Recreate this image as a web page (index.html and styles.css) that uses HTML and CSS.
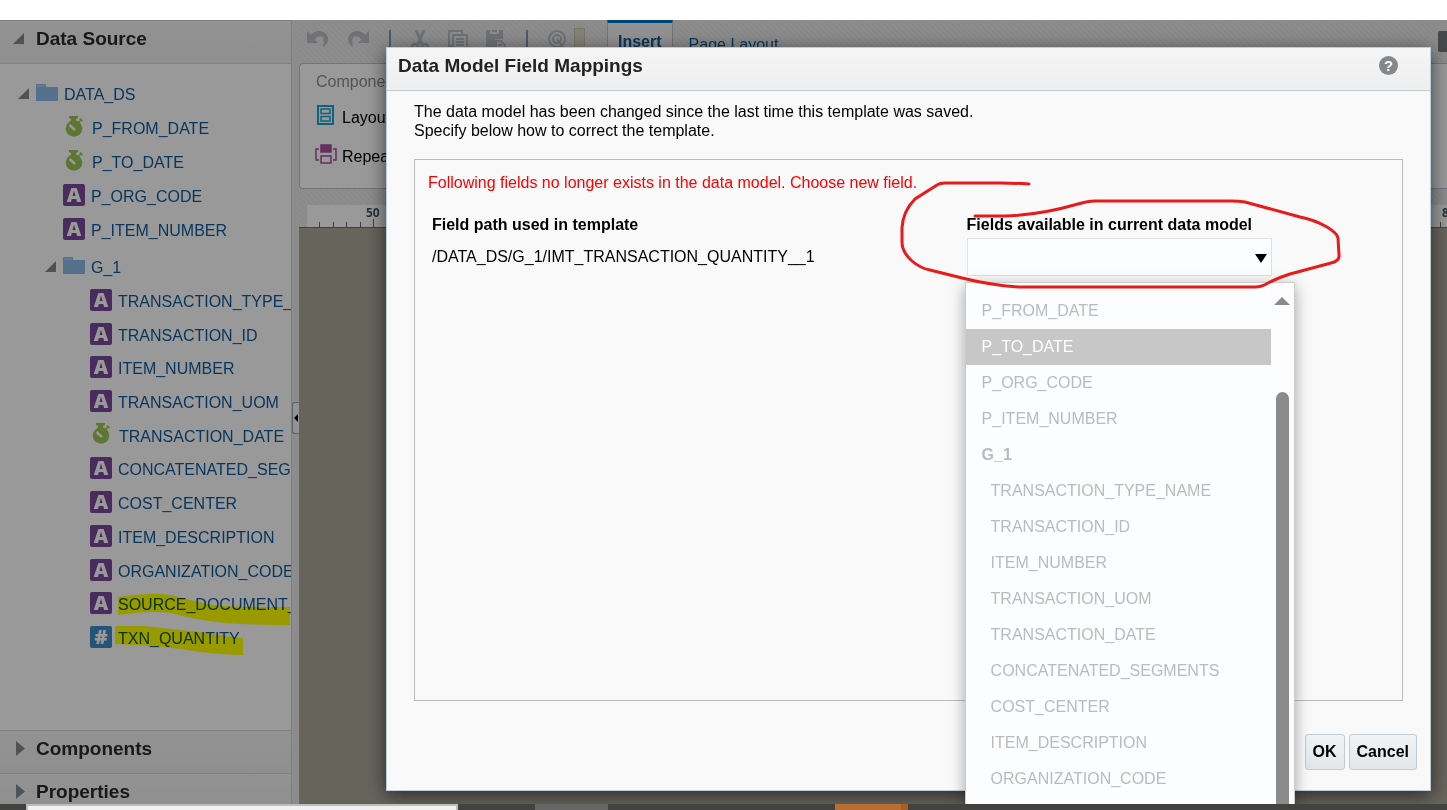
FILE: index.html
```html
<!DOCTYPE html>
<html lang="en">
  <head>
    <meta charset="UTF-8" />
    <title>Data Model Field Mappings</title>
    <link rel="stylesheet" href="styles.css">
  </head>
  <body>
    <svg class="defs" width="0" height="0">
      <symbol id="folder" viewBox="0 0 22 18">
        <path fill="#8bbde9" d="M0 1q0-1 1-1h8q1 0 1 1v2h12v14H0z" />
        <path fill="#a5cdf0" d="M1 1h8v2H1z" />
      </symbol>
      <symbol id="timer" viewBox="0 0 18 21">
        <circle cx="9" cy="12.5" r="8.3" fill="#9bc652" />
        <path fill="#9bc652" d="M4 0h9v2l-2 1v3H6V3L4 2zM13 6l2-2-.8-.8L15.500 2 18 4.500l-1.200 1-.8-.6-2 2z" />
        <path stroke="#fff" stroke-width="2.4" d="M4.500 9l5.500 5" />
      </symbol>
      <symbol id="open" viewBox="0 0 11 11">
        <path fill="#868b8f" d="M11 0v11H0z" />
      </symbol>
      <symbol id="closed" viewBox="0 0 9 15">
        <path fill="#868b8f" d="M0 0l9 7.5L0 15z" />
      </symbol>
    </svg>

    <div class="workspace">
      <aside class="sidebar">
        <h2 class="panel-title">
          <svg class="arrow" width="11" height="11"><use href="#open" /></svg>
          Data Source
        </h2>
        <div class="tree">
          <div class="node root">
            <svg class="arrow" width="11" height="11"><use href="#open" /></svg>
            <svg width="22" height="18"><use href="#folder" /></svg>
            <a href="#">DATA_DS</a>
          </div>
          <ul class="leaves params">
            <li><svg class="timer" width="18" height="21"><use href="#timer" /></svg><a href="#">P_FROM_DATE</a></li>
            <li><svg class="timer" width="18" height="21"><use href="#timer" /></svg><a href="#">P_TO_DATE</a></li>
            <li><span class="type">A</span><a href="#">P_ORG_CODE</a></li>
            <li><span class="type">A</span><a href="#">P_ITEM_NUMBER</a></li>
          </ul>
          <div class="node group">
            <svg class="arrow" width="11" height="11"><use href="#open" /></svg>
            <svg width="22" height="18"><use href="#folder" /></svg>
            <a href="#">G_1</a>
          </div>
          <ul class="leaves fields">
            <li><span class="type">A</span><a href="#">TRANSACTION_TYPE_</a></li>
            <li><span class="type">A</span><a href="#">TRANSACTION_ID</a></li>
            <li><span class="type">A</span><a href="#">ITEM_NUMBER</a></li>
            <li><span class="type">A</span><a href="#">TRANSACTION_UOM</a></li>
            <li><svg class="timer" width="18" height="21"><use href="#timer" /></svg><a href="#">TRANSACTION_DATE</a></li>
            <li><span class="type">A</span><a href="#">CONCATENATED_SEG</a></li>
            <li><span class="type">A</span><a href="#">COST_CENTER</a></li>
            <li><span class="type">A</span><a href="#">ITEM_DESCRIPTION</a></li>
            <li><span class="type">A</span><a href="#">ORGANIZATION_CODE</a></li>
            <li>
              <span class="type">A</span><a href="#">SOURCE_DOCUMENT_</a>
              <svg class="marker" width="180" height="36" viewBox="112 587 180 36">
                <path d="M118 597Q134 594 150 594Q166 593 182 598Q200 603 220 606Q245 607 290 607V625Q250 625 225 623Q190 619 172 613Q150 610 118 615z" />
              </svg>
            </li>
            <li>
              <span class="type number">#</span><a href="#">TXN_QUANTITY</a>
              <svg class="marker" width="180" height="36" viewBox="112 620 180 36">
                <path d="M115 626H145Q170 629 200 632Q230 637 243 638V655Q225 655 200 652Q160 645 115 644z" />
              </svg>
            </li>
          </ul>
        </div>
        <h2 class="panel-title">
          <svg class="arrow" width="9" height="15"><use href="#closed" /></svg>
          Components
        </h2>
        <h2 class="panel-title last">
          <svg class="arrow" width="9" height="15"><use href="#closed" /></svg>
          Properties
        </h2>
      </aside>

      <div class="splitter">
        <button class="collapse" aria-label="Collapse panel">
          <svg width="4" height="8"><path d="M4 0v8L0 4z" /></svg>
        </button>
      </div>

      <main class="editor">
        <div class="toolbar">
          <div class="tools">
            <svg width="22" height="18" viewBox="0 0 22 18"><path fill="#b9bdc1" d="M0 1v12h11L7.500 9.500Q11 5 15 6.500Q18 8 16 17Q22 13 21 7Q18 1 12 1Q7 1 4 5z" /></svg>
            <svg width="22" height="18" viewBox="0 0 22 18"><path fill="#b9bdc1" d="M22 1v12H11l3.500-3.500Q11 5 7 6.500Q4 8 6 17Q0 13 1 7Q4 1 10 1Q15 1 18 5z" /></svg>
            <i class="separator"></i>
            <svg width="20" height="22" viewBox="0 0 20 22" fill="none" stroke="#b9bdc1" stroke-width="3"><path d="M6 0l6 14M14 0L8 14" /><circle cx="5" cy="17" r="3" /><circle cx="15" cy="17" r="3" /></svg>
            <svg width="20" height="22" viewBox="0 0 20 22" fill="none" stroke="#b9bdc1" stroke-width="2"><path d="M4 16H1V1h13v3M5 5h14v16H5zM8 9h8M8 12h8M8 15h8" /></svg>
            <svg width="20" height="22" viewBox="0 0 20 22"><path fill="#b9bdc1" d="M0 0h4v4h9V0h4v9H9v9H0zM6 0h5v2H6z" /><path fill="none" stroke="#b9bdc1" stroke-width="2" d="M10 11h5l4 4v6h-9zM12 15h4" /></svg>
            <i class="separator"></i>
            <svg width="20" height="22" viewBox="0 0 20 22" fill="none" stroke="#b9bdc1" stroke-width="2"><circle cx="10" cy="9" r="8" /><circle cx="10" cy="9" r="4" /><path d="M10 9l7 9" /></svg>
            <i class="swatch"></i>
          </div>
          <nav class="tabs">
            <a class="tab active" href="#">Insert</a>
            <a class="tab" href="#">Page Layout</a>
          </nav>
          <button class="panel-toggle" aria-label="Toggle panel"></button>
        </div>

        <div class="ribbon">
          <div class="ribbon-title">Components</div>
          <button class="component">
            <svg width="22" height="20" viewBox="0 0 22 20" fill="none" stroke="#18a5cf"><path stroke-width="2" d="M3 1h15v18H3z" /><path stroke-width="1.500" d="M6 4h9v4.500H6zM6 11.500h9V16H6z" /></svg>
            Layout Grid
          </button>
          <button class="component">
            <svg width="22" height="20" viewBox="0 0 22 20" fill="none" stroke="#a8509c" stroke-width="1.500"><path fill="#a8509c" d="M6 1h10v7H6z" /><path d="M6 12h10v7H6zM4 5H1v11h3M18 5h3v11h-3" /></svg>
            Repeating Section
          </button>
        </div>

        <div class="ruler">
          <svg width="80" height="22" viewBox="307 205 80 22"><path d="M319.500 222v5M333.500 222v5M346.500 222v5M360.500 222v5M373.500 219v8" /><text x="366" y="217">50</text></svg>
          <svg width="10" height="22" viewBox="1437 205 10 22"><path d="M1440.500 222v5" /><text x="1442" y="217">8</text></svg>
        </div>
        <div class="canvas"></div>
      </main>

      <div class="scrim">
        <section class="dialog" role="dialog" aria-labelledby="dialog-title">
          <header class="dialog-header">
            <h1 id="dialog-title">Data Model Field Mappings</h1>
            <button class="help" aria-label="Help">?</button>
          </header>
          <div class="dialog-body">
            <p class="message">
              The data model has been changed since the last time this template was saved.<br />
              Specify below how to correct the template.
            </p>
            <div class="mappings">
              <p class="warning">Following fields no longer exists in the data model. Choose new field.</p>
              <table>
                <thead>
                  <tr>
                    <th>Field path used in template</th>
                    <th><label for="new-field">Fields available in current data model</label></th>
                  </tr>
                </thead>
                <tbody>
                  <tr>
                    <td>/DATA_DS/G_1/IMT_TRANSACTION_QUANTITY__1</td>
                    <td>
                      <div class="picker">
                        <select id="new-field"><option></option></select>
                        <svg class="caret" width="12" height="9"><path d="M0 0h12L6 9z" /></svg>
                        <div class="popup">
                          <ul class="options" role="listbox" aria-label="Fields">
                            <li role="option">P_FROM_DATE</li>
                            <li role="option" class="hover">P_TO_DATE</li>
                            <li role="option">P_ORG_CODE</li>
                            <li role="option">P_ITEM_NUMBER</li>
                            <li class="heading">G_1</li>
                            <li role="option" class="nested">TRANSACTION_TYPE_NAME</li>
                            <li role="option" class="nested">TRANSACTION_ID</li>
                            <li role="option" class="nested">ITEM_NUMBER</li>
                            <li role="option" class="nested">TRANSACTION_UOM</li>
                            <li role="option" class="nested">TRANSACTION_DATE</li>
                            <li role="option" class="nested">CONCATENATED_SEGMENTS</li>
                            <li role="option" class="nested">COST_CENTER</li>
                            <li role="option" class="nested">ITEM_DESCRIPTION</li>
                            <li role="option" class="nested">ORGANIZATION_CODE</li>
                          </ul>
                          <div class="scrollbar">
                            <svg width="16" height="8"><path d="M0 8l8-8 8 8z" /></svg>
                            <div class="thumb"></div>
                          </div>
                        </div>
                        <svg class="scribble" width="450" height="120" viewBox="895 175 450 120">
                          <path d="M1029 184Q1014 183 1000 183H945Q940 183 937 185L915 199Q903 211 902 228V242Q902 252 912 261Q920 268 930 270L962 278Q990 285 1018 287H1255Q1262 287 1268 283Q1280 277 1290 274L1331 263Q1340 261 1339 255L1338 238Q1337 233 1327 227Q1315 220 1300 217L1245 202Q1239 201 1230 201H1095Q1088 201 1078 204Q1040 215 1005 216H975" />
                        </svg>
                      </div>
                    </td>
                  </tr>
                </tbody>
              </table>
            </div>
          </div>
          <footer class="dialog-footer">
            <button>OK</button>
            <button>Cancel</button>
          </footer>
        </section>
      </div>
    </div>

    <div class="taskbar">
      <span class="task search"></span>
      <span class="task"></span>
      <span class="task alert"></span>
    </div>
  </body>
</html>
```

FILE: styles.css
```css
* {
  box-sizing: border-box;
}

body {
  margin: 0;
  padding-top: 20px;
  height: 100vh;
  display: flex;
  flex-direction: column;
  overflow: hidden;
  background: white;
  color: black;
  font-family: "Liberation Sans", Arial, sans-serif;
  font-size: 16px;
}

h1,
h2,
p,
ul {
  margin: 0;
  padding: 0;
  list-style: none;
}

a {
  color: #0f5a9c;
  text-decoration: none;
}

button {
  font-family: inherit;
  font-size: 16px;
}

svg {
  flex: none;
}

.defs {
  position: absolute;
}

.workspace {
  position: relative;
  flex: 1;
  min-height: 0;
  display: flex;
  overflow: hidden;
}

/* sidebar */

.sidebar {
  width: 292px;
  display: flex;
  flex-direction: column;
  background: white;
  border-right: 1px solid #d0d4d8;
  overflow: hidden;
}

.panel-title {
  flex: none;
  height: 43px;
  padding: 8px 0 0 13px;
  display: flex;
  border-top: 1px solid #d0d4d8;
  background: linear-gradient(#f5f5f5, #eeeeee);
  color: #2a2a2a;
  font-size: 19px;
  line-height: 20px;
}

.panel-title .arrow {
  width: 23px;
  height: 11px;
  margin-top: 4px;
  padding-right: 12px;
}

.panel-title .arrow[height="15"] {
  height: 15px;
  margin: 2px -2px 0 2px;
}

.panel-title:first-child {
  height: 44px;
  border-bottom: 1px solid #d0d4d8;
}

.panel-title.last {
  height: 31px;
}

.tree {
  flex: 1;
  padding-top: 12px;
  overflow: hidden;
  white-space: nowrap;
}

.tree a {
  padding-top: 4px;
}

.node {
  height: 34px;
  display: flex;
  align-items: center;
  gap: 6px;
}

.node .arrow {
  margin-right: 1px;
}

.node.root {
  padding-left: 18px;
}

.node.group {
  margin-top: 3px;
  padding-left: 45px;
}

.leaves {
  display: grid;
  grid-auto-rows: 1fr;
}

.leaves li {
  position: relative;
  display: flex;
  align-items: center;
  gap: 6px;
}

.params {
  height: 136px;
  padding-left: 63px;
}

.fields {
  height: 371px;
  padding-left: 90px;
}

.timer {
  margin: 0 3px 2px 2px;
}

.type {
  flex: none;
  width: 22px;
  height: 22px;
  border-radius: 2px;
  background: #7a4a9c;
  color: white;
  font-family: "Open Sans", sans-serif;
  font-size: 20px;
  font-weight: 800;
  line-height: 22px;
  text-align: center;
}

.type.number {
  background: #3d8ec9;
}

.marker {
  position: absolute;
  top: 0;
  left: 22px;
  overflow: visible;
  fill: #ffff00;
  mix-blend-mode: multiply;
}

.splitter {
  width: 7px;
  display: flex;
  align-items: center;
  background: #e9eaeb;
}

.collapse {
  width: 7px;
  height: 32px;
  margin-top: 12px;
  padding: 0 0 0 1px;
  display: flex;
  align-items: center;
  border: 1px solid #98a8b8;
  border-right: 0;
  border-radius: 3px 0 0 3px;
  background: #f5f5f5;
}

/* editor */

.editor {
  flex: 1;
  min-width: 0;
  display: flex;
  flex-direction: column;
  background: repeating-linear-gradient(45deg, #e6e7e8 0 2px, #ececec 2px 4px);
}

.toolbar {
  height: 43px;
  display: flex;
}

.tools {
  width: 308px;
  padding: 10px 0 0 8px;
  display: flex;
  align-items: flex-start;
  gap: 18px;
}

.separator {
  width: 2px;
  height: 24px;
  margin: 0 1px 0 2px;
  background: #8796ae;
}

.swatch {
  width: 11px;
  height: 24px;
  margin: -2px 0 0 -11px;
  border: 1px solid #c5c5ac;
  background: #dadac4;
}

.tabs {
  flex: 1;
  display: flex;
}

.tab {
  padding: 15px 16px 0;
  line-height: 20px;
}

.tab.active {
  padding: 9px 10px 0;
  border: 1px solid #c0c4c8;
  border-top: 3px solid #0072cf;
  border-bottom: 0;
  background: #f4f4f4;
  font-weight: bold;
}

.panel-toggle {
  width: 9px;
  height: 21px;
  margin-top: 11px;
  padding: 0;
  border: 0;
  border-radius: 2px 0 0 2px;
  background: #75797d;
}

.ribbon {
  height: 126px;
  padding: 8px 15px;
  display: flex;
  flex-direction: column;
  align-items: flex-start;
  border: 1px solid #b8c4d2;
  border-right: 0;
  border-radius: 4px 0 0 4px;
  background: white;
}

.ribbon-title {
  padding-left: 1px;
  color: #8c8c8c;
  line-height: 20px;
}

.component {
  height: 39px;
  padding: 0;
  display: flex;
  align-items: center;
  gap: 5px;
  border: 0;
  background: none;
  color: black;
}

.component svg {
  margin-bottom: 5px;
}

.component:first-of-type {
  margin-top: 6px;
}

.ruler {
  height: 22px;
  margin: 16px 0 0 8px;
  display: flex;
  justify-content: space-between;
  background: white;
}

.ruler path {
  stroke: #5a6878;
}

.ruler text {
  fill: #44546a;
  font: bold 12px "Open Sans", sans-serif;
}

.canvas {
  flex: 1;
  border-top: 1px solid #6c7480;
  background: #aca79a;
}

/* dialog */

.scrim {
  position: absolute;
  inset: 0;
  padding: 27px 16px 13px 386px;
  display: flex;
  background: rgba(0, 0, 0, 0.4);
}

.dialog {
  flex: 1;
  min-width: 0;
  display: flex;
  flex-direction: column;
  border: 1px solid #bfcddb;
  background: #f9f9f9;
  box-shadow: 0 4px 18px rgba(0, 0, 0, 0.6);
}

.dialog-header {
  height: 43px;
  padding: 0 32px 0 11px;
  display: flex;
  justify-content: space-between;
  align-items: flex-start;
  border-bottom: 1px solid #bfcddb;
  background: linear-gradient(#f5f5f5, #eeeeee);
}

.dialog-header h1 {
  padding-top: 8px;
  color: #222222;
  font-size: 19px;
  line-height: 20px;
}

.help {
  width: 19px;
  height: 19px;
  margin-top: 8px;
  padding: 0;
  border: 0;
  border-radius: 50%;
  background: #83888c;
  color: white;
  font-size: 15px;
  font-weight: bold;
  line-height: 19px;
}

.dialog-body {
  flex: 1;
  padding: 11px 27px 0;
  display: flex;
  flex-direction: column;
}

.message {
  line-height: 19px;
}

.mappings {
  flex: 1;
  margin-top: 19px;
  padding: 13px 2px 0 13px;
  border: 1px solid #bbbbbb;
}

.warning {
  color: red;
  line-height: 20px;
}

table {
  width: 100%;
  margin-top: 22px;
  border-collapse: collapse;
  table-layout: fixed;
}

th,
td {
  padding: 0 0 0 4px;
  text-align: left;
}

th {
  height: 23px;
  line-height: 20px;
  vertical-align: top;
}

th:first-child {
  width: 55%;
}

.picker {
  position: relative;
  width: 305px;
}

select {
  display: block;
  width: 100%;
  height: 38px;
  appearance: none;
  border: 1px solid #dde2e5;
  border-radius: 0;
  background: #fcfdff;
}

.caret {
  position: absolute;
  top: 16px;
  right: 5px;
  pointer-events: none;
}

.popup {
  position: absolute;
  top: 44px;
  left: -2px;
  width: 330px;
  padding-bottom: 12px;
  display: flex;
  border: 1px solid #cccccc;
  background: #fcfdff;
  box-shadow: 0 4px 14px rgba(0, 0, 0, 0.35);
}

.options {
  flex: 1;
  padding-top: 10px;
  color: #bbbbbb;
}

.options li {
  height: 36px;
  padding-left: 16px;
  line-height: 36px;
}

.options .hover {
  background: #c7c7c7;
  color: white;
}

.options .heading {
  font-weight: bold;
}

.options .nested {
  padding-left: 25px;
}

.scrollbar {
  width: 23px;
  padding-top: 14px;
  display: flex;
  flex-direction: column;
  align-items: center;
  background: #fcfcfc;
  fill: #8a8a8a;
}

.thumb {
  flex: 1;
  width: 13px;
  margin: 87px 0 -12px;
  border-radius: 7px 7px 0 0;
  background: #8a8a8a;
}

.scribble {
  position: absolute;
  top: -63px;
  left: -72px;
  fill: none;
  stroke: #e81b1b;
  stroke-width: 3;
  stroke-linecap: round;
  pointer-events: none;
}

.dialog-footer {
  padding: 33px 13px 20px;
  display: flex;
  justify-content: flex-end;
  gap: 4px;
}

.dialog-footer button {
  height: 36px;
  padding: 0 7px;
  border: 1px solid #bfcbd7;
  border-radius: 3px;
  background: linear-gradient(#f1f3f4, #e2e6e9);
  color: black;
  font-weight: bold;
}

/* taskbar */

.taskbar {
  height: 6px;
  padding-left: 26px;
  display: flex;
  background: #424240;
}

.task {
  width: 73px;
  margin-right: 227px;
  background: #666666;
}

.task.search {
  width: 432px;
  margin-right: 77px;
  border: 2px solid #bdbdbd;
  border-bottom: 0;
  background: #f0f0f0;
}

.task.alert {
  border-right: 7px solid #a85f24;
  background: #b86d33;
}
```
